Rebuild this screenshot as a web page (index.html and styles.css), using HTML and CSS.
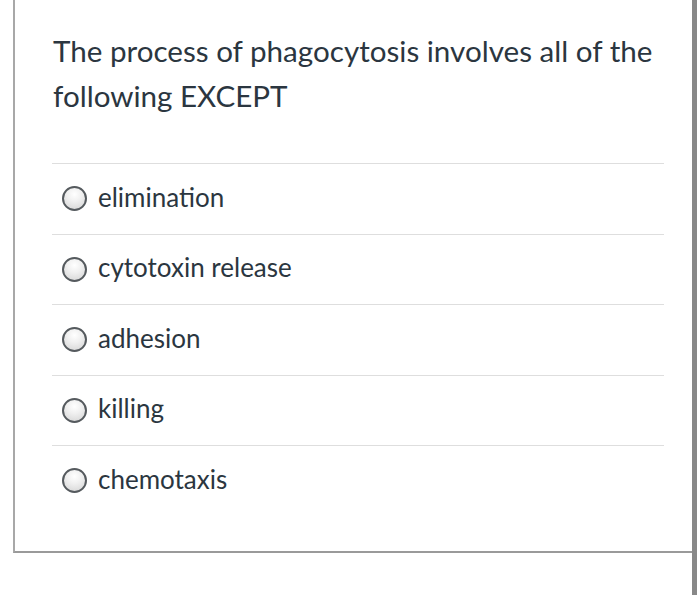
FILE: index.html
```html
<!DOCTYPE html>
<html>
<head>
<meta charset="utf-8">
<link rel="stylesheet" href="styles.css">
</head>
<body>
<div class="page">
  <div class="card">
    <div class="question">The process of phagocytosis involves all of the following EXCEPT</div>
    <ul class="answers">
      <li class="answer"><span class="radio"></span><span class="label">elimination</span></li>
      <li class="answer"><span class="radio"></span><span class="label">cytotoxin release</span></li>
      <li class="answer"><span class="radio"></span><span class="label">adhesion</span></li>
      <li class="answer"><span class="radio"></span><span class="label">killing</span></li>
      <li class="answer"><span class="radio"></span><span class="label">chemotaxis</span></li>
    </ul>
  </div>
  <div class="edge"></div>
</div>
</body>
</html>
```
FILE: styles.css
```css
html, body {
  margin: 0;
  padding: 0;
  background: #ffffff;
}
body {
  font-family: Lato, "Open Sans", sans-serif;
  color: #2b3640;
}
.page {
  display: flex;
  height: 595px;
  width: 700px;
}
.card {
  flex: 1;
  margin-left: 13px;
  height: 553px;
  border-left: 2px solid #a8a8a8;
  border-bottom: 2px solid #9a9a9a;
  padding: 28px 28px 0 37px;
  box-sizing: border-box;
}
.edge {
  width: 5px;
  margin-right: 3px;
  background: #888888;
}
.question {
  font-size: 29.6px;
  line-height: 45px;
  padding-left: 1px;
}
.answers {
  list-style: none;
  margin: 45px 0 0 0;
  padding: 0;
}
.answer {
  display: flex;
  align-items: center;
  height: 70.5px;
  border-top: 1.5px solid #dedede;
  box-sizing: border-box;
  padding-left: 10px;
}
.radio {
  width: 21px;
  height: 21px;
  border: 2px solid #555a5e;
  border-radius: 50%;
  background: radial-gradient(circle at 50% 30%, #ffffff 0%, #f0f0f0 40%, #d2d2d2 100%);
  margin-right: 11px;
  flex: none;
}
.label {
  font-size: 26px;
  line-height: 30px;
  margin-top: -4px;
}
```
